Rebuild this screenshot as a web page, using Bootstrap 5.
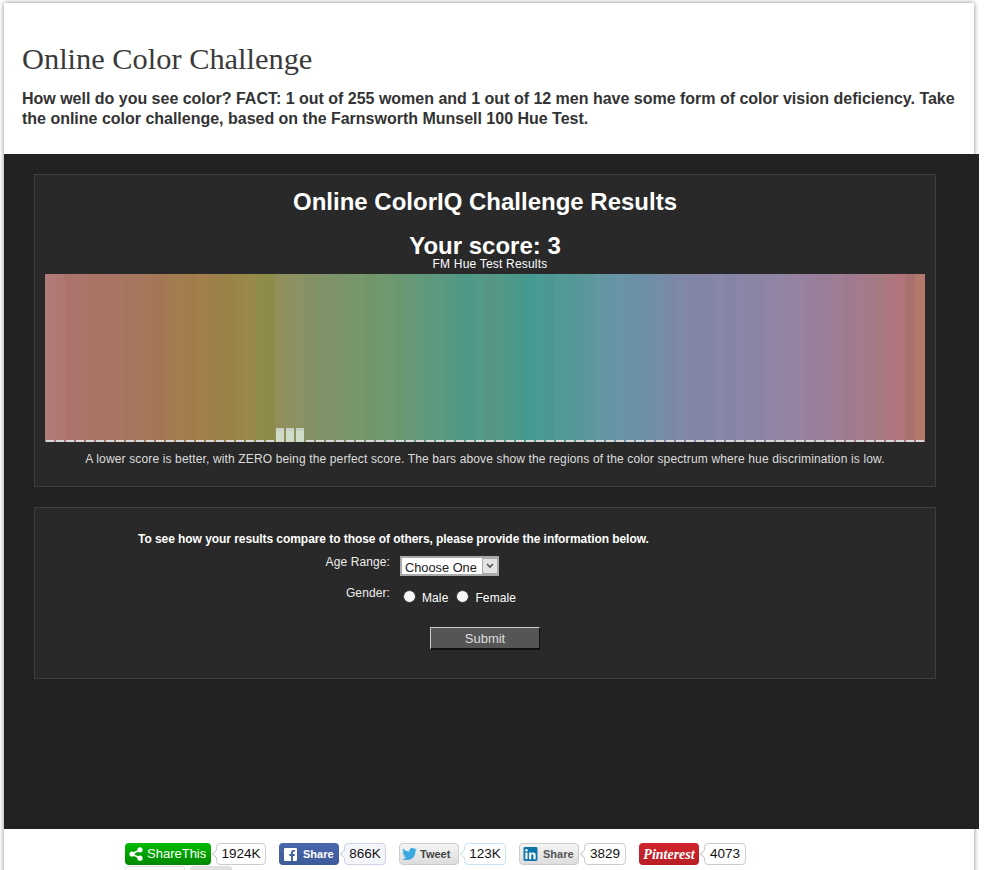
<!DOCTYPE html>
<html lang="en">
<head>
    <meta charset="UTF-8">
    <meta name="viewport" content="width=device-width, initial-scale=1.0">
    <title>Online Color Challenge</title>
    <link rel="stylesheet" href="https://cdn.jsdelivr.net/npm/bootstrap@5.3.0/dist/css/bootstrap.min.css">
    <style>
        html, body {
            height: 870px;
            overflow: hidden;
            background: #fff;
        }

        body {
            font-family: "Liberation Sans", Arial, sans-serif;
            font-size: 12px;
            color: #fff;
        }

        .page-wrap {
            width: 970px;
            margin: 3px 0 0 4px;
            background: #fff;
            box-shadow: 0 0 5px #888;
        }

        .page-head {
            height: 151px;
            padding: 41px 18px 0;
            color: #333;
        }

        .page-head h1 {
            font-family: "Liberation Serif", Georgia, serif;
            font-size: 30.4px;
            line-height: 30px;
            font-weight: 400;
            margin: 0 0 15px;
            color: #3a3a3a;
        }

        .page-head p {
            font-size: 16px;
            line-height: 20px;
            font-weight: 700;
            letter-spacing: -.01px;
            margin: 0;
        }

        .dark-area {
            width: 975px;
            height: 675px;
            padding: 20px 43px 0 30px;
            background: #222;
        }

        .result-panel {
            background: #292929;
            border: 1px solid #3f3f3f;
            height: 313px;
            padding: 0 10px;
            text-align: center;
        }

        .result-panel h2 {
            font-size: 24px;
            line-height: 28px;
            font-weight: 700;
            margin: 13px 0 18px;
        }

        .score {
            font-size: 24px;
            line-height: 24px;
            font-weight: 700;
        }

        .chart-title {
            line-height: 12px;
            margin-bottom: 4px;
            padding-left: 10px;
            letter-spacing: .2px;
        }

        .hue-chart {
            height: 168px;
        }

        .hue-col {
            width: 10px;
            height: 100%;
        }

        .hue-dash {
            width: 8px;
            height: 2px;
            margin: 0 1px;
            background: #d8d8d8;
        }

        .hue-bar {
            width: 8px;
            height: 14px;
            margin: 0 1px;
            background: #cedcc8;
            border-top: 3px solid #c9cfc4;
        }

        .chart-note {
            margin: 10px 0 0;
            line-height: 14px;
            letter-spacing: .14px;
            color: #ddd;
        }

        .info-panel {
            background: #292929;
            border: 1px solid #3f3f3f;
            height: 172px;
            margin-top: 20px;
            padding-top: 24px;
        }

        .info-lead {
            margin: 0 0 7px 103px;
            font-weight: 700;
            line-height: 14px;
            letter-spacing: -.06px;
        }

        .form-line {
            height: 31px;
        }

        .form-label-cell {
            width: 365px;
            margin: 0;
            text-align: right;
            padding-right: 10px;
            letter-spacing: .1px;
            color: #eee;
        }

        .select-wrap {
            position: relative;
            width: 99px;
            height: 20px;
            margin-top: 3px;
        }

        .age-select {
            display: block;
            width: 100%;
            height: 100%;
            font-family: "Liberation Sans", Arial, sans-serif;
            font-size: 12.8px;
            border: 2px solid #aaa;
            border-radius: 0;
            background: #fff;
            color: #222;
            padding: 0 3px;
            appearance: none;
            outline: none;
        }

        .select-arrow {
            position: absolute;
            top: 2px;
            right: 1px;
            width: 16px;
            height: 16px;
            background: #e4e4e4;
            border: 1px solid #aaa;
            pointer-events: none;
        }

        .gender-opts {
            margin-top: 5px;
            height: 18px;
        }

        .gender-opts input {
            appearance: none;
            width: 13px;
            height: 13px;
            border-radius: 50%;
            background: #f8f8f8;
            border: 1px solid #333;
            margin: -4px 6px 0 3px;
        }

        .gender-opts label {
            margin: 0 5px 0 0;
            letter-spacing: .1px;
        }

        .submit-btn {
            display: block;
            width: 110px;
            height: 23px;
            margin: 12px 0 0 395px;
            padding: 0;
            background: #555;
            color: #ddd;
            font-size: 13px;
            line-height: 19px;
            border-style: solid;
            border-width: 1px 1px 2px 1px;
            border-color: #ccc #111 #111 #ccc;
            border-radius: 0;
        }

        .share-row {
            height: 37px;
            padding: 14px 0 0 121px;
            gap: 13px;
        }

        .share-item {
            display: flex;
            align-items: flex-start;
            gap: 5px;
        }

        .share-btn {
            width: 60px;
            height: 22px;
            border-radius: 4px;
            display: flex;
            align-items: center;
            font-size: 11px;
            font-weight: 700;
        }

        .share-count {
            width: 42px;
            height: 22px;
            line-height: 20px;
            text-align: center;
            border: 1px solid #ccc;
            border-radius: 4px;
            color: #111;
            background: #fff;
            font-size: 13.5px;
            position: relative;
        }

        .share-count::before {
            content: "";
            position: absolute;
            left: -4px;
            top: 7px;
            width: 6px;
            height: 6px;
            background: #fff;
            border-left: 1px solid #ccc;
            border-bottom: 1px solid #ccc;
            transform: rotate(45deg);
        }

        .btn-sharethis { width: 86px; background: linear-gradient(#0b0, #080); color: #fff; padding-left: 4px; gap: 4px; font-weight: 400; font-size: 13px; }
        .btn-fb { background: linear-gradient(#4a66ad, #3d5a98); color: #fff; padding-left: 5px; gap: 6px; }
        .btn-tw { background: linear-gradient(#f5f5f5, #ddd); color: #444; border: 1px solid #ccc; padding-left: 2px; gap: 3px; }
        .btn-li { background: linear-gradient(#f5f5f5, #ddd); color: #555; border: 1px solid #ccc; padding-left: 3px; gap: 5px; }
        .btn-pin { background: linear-gradient(#d1252d, #b81f26); color: #fff; justify-content: center; font-family: "Liberation Serif", serif; font-style: italic; font-size: 14px; }
        .count-wide { width: 50px; }
        .count-fb { border-color: #ccd3e4; background: #f4f6fb; }
        .count-fb::before { border-color: #ccd3e4; background: #f4f6fb; }
        .count-tw { border-color: #c8e4f2; }
        .count-tw::before { border-color: #c8e4f2; }

        .share-next {
            padding-left: 121px;
            gap: 5px;
        }

        .share-stub {
            width: 60px;
            height: 22px;
            border: 1px solid #ddd;
            border-radius: 3px;
        }

        .share-stub-grey {
            width: 42px;
            background: #e2e2e2;
        }
    </style>
</head>
<body>

<div class="page-wrap">
    <div class="page-head">
        <h1>Online Color Challenge</h1>
        <p>How well do you see color? FACT: 1 out of 255 women and 1 out of 12 men have some form of color vision deficiency. Take the online color challenge, based on the Farnsworth Munsell 100 Hue Test.</p>
    </div>

    <div class="dark-area">
        <div class="result-panel">
            <h2>Online ColorIQ Challenge Results</h2>
            <div class="score">Your score: 3</div>
            <div class="chart-title">FM Hue Test Results</div>
            <div class="hue-chart d-flex" id="hueChart"></div>
            <p class="chart-note">A lower score is better, with ZERO being the perfect score. The bars above show the regions of the color spectrum where hue discrimination is low.</p>
        </div>

        <form class="info-panel">
            <p class="info-lead">To see how your results compare to those of others, please provide the information below.</p>
            <div class="form-line d-flex">
                <label class="form-label-cell" for="ageRange">Age Range:</label>
                <div class="select-wrap">
                    <select class="age-select" id="ageRange"><option>Choose One</option></select>
                    <span class="select-arrow d-flex align-items-center justify-content-center">
                        <svg width="8" height="6" viewBox="0 0 8 6"><path d="M1 1l3 3 3-3" fill="none" stroke="#555" stroke-width="1.600"/></svg>
                    </span>
                </div>
            </div>
            <div class="form-line d-flex">
                <div class="form-label-cell">Gender:</div>
                <div class="gender-opts d-flex align-items-center">
                    <input type="radio" name="gender" id="male"><label for="male">Male</label>
                    <input type="radio" name="gender" id="female"><label for="female">Female</label>
                </div>
            </div>
            <button class="submit-btn" type="button">Submit</button>
        </form>
    </div>

    <div class="share-row d-flex">
        <div class="share-item">
            <div class="share-btn btn-sharethis">
                <svg width="14" height="14" viewBox="0 0 14 14"><circle cx="3" cy="7" r="2.600" fill="#fff"/><circle cx="11" cy="2.800" r="2.600" fill="#fff"/><circle cx="11" cy="11.200" r="2.600" fill="#fff"/><path d="M11 2.800 3 7l8 4.200" fill="none" stroke="#fff" stroke-width="1.600"/></svg>
                <span>ShareThis</span>
            </div>
            <div class="share-count count-wide">1924K</div>
        </div>
        <div class="share-item">
            <div class="share-btn btn-fb">
                <svg width="13" height="13" viewBox="0 0 16 16"><rect width="16" height="16" rx="1.500" fill="#fff"/><path d="M11 16V9.800h2l.3-2.400H11V5.900c0-.7.2-1.200 1.200-1.200h1.200V2.600c-.6-.1-1.200-.1-1.800-.1-1.800 0-3 1.100-3 3.100v1.800H6.600v2.400h2V16z" fill="#4560a4"/></svg>
                <span>Share</span>
            </div>
            <div class="share-count count-fb">866K</div>
        </div>
        <div class="share-item">
            <div class="share-btn btn-tw">
                <svg width="15" height="12" viewBox="0 0 16 13"><path d="M16 1.500c-.6.300-1.200.400-1.900.500.700-.400 1.200-1 1.400-1.800-.6.400-1.300.600-2.100.800A3.300 3.300 0 0 0 7.800 4C5.100 3.900 2.700 2.600 1.100.600.200 2.100.700 4 2.100 5c-.5 0-1-.2-1.500-.4 0 1.600 1.100 3 2.600 3.300-.5.100-1 .2-1.500.1.400 1.300 1.600 2.200 3.100 2.300A6.600 6.600 0 0 1 0 11.600 9.300 9.300 0 0 0 14.400 3.300c.6-.5 1.200-1.100 1.600-1.800z" fill="#3aa9e0"/></svg>
                <span>Tweet</span>
            </div>
            <div class="share-count count-tw">123K</div>
        </div>
        <div class="share-item">
            <div class="share-btn btn-li">
                <svg width="15" height="14" viewBox="0 0 15 15"><rect width="15" height="15" rx="1.500" fill="#0e76a8"/><rect x="2" y="6" width="2.300" height="7" fill="#fff"/><circle cx="3.150" cy="3.400" r="1.300" fill="#fff"/><path d="M6 6h2.200v1c.4-.7 1.200-1.200 2.200-1.200 1.900 0 2.600 1.200 2.600 3V13h-2.300V9.300c0-.9-.3-1.500-1.100-1.500-.9 0-1.300.6-1.300 1.500V13H6z" fill="#fff"/></svg>
                <span>Share</span>
            </div>
            <div class="share-count">3829</div>
        </div>
        <div class="share-item">
            <div class="share-btn btn-pin">Pinterest</div>
            <div class="share-count">4073</div>
        </div>
    </div>
    <div class="share-next d-flex">
        <div class="share-stub"></div>
        <div class="share-stub share-stub-grey"></div>
    </div>
</div>

<script>
    // colours read off the spectrum: [column, rgb], 88 columns of 10px
    const spectrum = [
        [0, [176, 122, 120]], [2, [172, 116, 108]], [9, [165, 118, 92]], [14, [163, 124, 76]],
        [19, [152, 133, 72]], [20, [155, 138, 78]], [21, [142, 140, 72]], [22, [140, 140, 72]],
        [23, [145, 143, 92]], [27, [130, 146, 104]], [33, [112, 152, 108]], [37, [98, 152, 122]],
        [42, [78, 152, 136]], [44, [88, 150, 132]], [48, [68, 154, 144]], [52, [84, 152, 150]],
        [56, [102, 150, 165]], [60, [110, 142, 168]], [64, [130, 134, 168]], [70, [138, 133, 165]],
        [75, [150, 130, 160]], [80, [160, 122, 145]], [83, [168, 122, 130]], [85, [176, 115, 122]],
        [86, [168, 114, 112]], [87, [178, 120, 108]]
    ];
    const jitter = [0, 1, -1, 1, 0, -1];
    const scores = { 23: 1, 24: 1, 25: 1 };

    function colorAt(i) {
        let a = spectrum[0], b = spectrum[spectrum.length - 1];
        for (let s = 0; s < spectrum.length - 1; s++) {
            if (i >= spectrum[s][0] && i <= spectrum[s + 1][0]) {
                a = spectrum[s];
                b = spectrum[s + 1];
                break;
            }
        }
        const t = (i - a[0]) / ((b[0] - a[0]) || 1);
        const j = jitter[i % jitter.length];
        return 'rgb(' + a[1].map((v, k) => Math.round(v + (b[1][k] - v) * t) + j).join(',') + ')';
    }

    const chart = document.getElementById('hueChart');
    for (let i = 0; i < 88; i++) {
        const col = document.createElement('div');
        col.className = 'hue-col d-flex align-items-end';
        col.style.background = colorAt(i);
        const bar = document.createElement('div');
        bar.className = scores[i] ? 'hue-bar' : 'hue-dash';
        col.appendChild(bar);
        chart.appendChild(col);
    }
</script>

<script src="https://cdn.jsdelivr.net/npm/bootstrap@5.3.0/dist/js/bootstrap.bundle.min.js"></script>
</body>
</html>
